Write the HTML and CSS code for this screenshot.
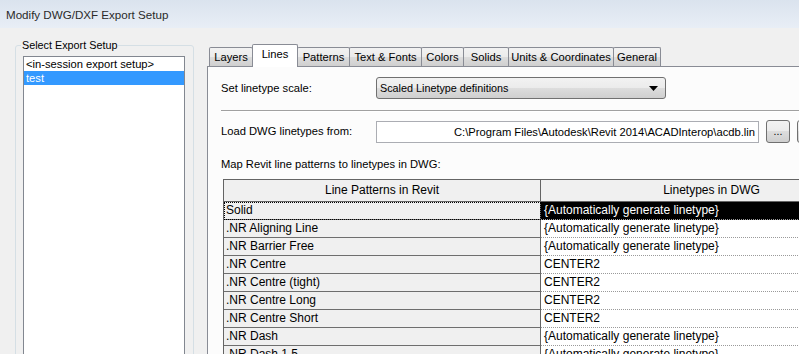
FILE: index.html
```html
<!DOCTYPE html>
<html>
<head>
<meta charset="utf-8">
<link rel="stylesheet" href="styles.css">
</head>
<body>
<div class="titlebar">Modify DWG/DXF Export Setup</div>
<div class="main">
  <div class="group">
    <div class="group-label">Select Export Setup</div>
    <div class="list">
      <div class="item">&lt;in-session export setup&gt;</div>
      <div class="item selected">test</div>
    </div>
  </div>
  <div class="tabs-area">
    <div class="tabs">
      <div class="tab t1">Layers</div>
      <div class="tab active t2">Lines</div>
      <div class="tab t3">Patterns</div>
      <div class="tab t4">Text &amp; Fonts</div>
      <div class="tab t5">Colors</div>
      <div class="tab t6">Solids</div>
      <div class="tab t7">Units &amp; Coordinates</div>
      <div class="tab t8">General</div>
    </div>
    <div class="panel">
      <div class="row row-scale">
        <span class="label">Set linetype scale:</span>
        <div class="combo">
          <span class="combo-text">Scaled Linetype definitions</span>
          <svg class="arrow" width="9" height="5" viewBox="0 0 9 5"><path d="M0 0H9L4.5 5Z" fill="#000"/></svg>
        </div>
      </div>
      <div class="sep"></div>
      <div class="row row-load">
        <span class="label">Load DWG linetypes from:</span>
        <div class="textbox">C:\Program Files\Autodesk\Revit 2014\ACADInterop\acdb.lin</div>
        <div class="btn">...</div>
        <div class="btn"></div>
      </div>
      <div class="caption">Map Revit line patterns to linetypes in DWG:</div>
      <div class="grid">
        <div class="hcell c1">Line Patterns in Revit</div>
        <div class="hcell c2">Linetypes in DWG</div>

        <div class="cell c1 focus">Solid</div>
        <div class="cell c2 sel">{Automatically generate linetype}</div>

        <div class="cell c1">.NR Aligning Line</div>
        <div class="cell c2">{Automatically generate linetype}</div>

        <div class="cell c1">.NR Barrier Free</div>
        <div class="cell c2">{Automatically generate linetype}</div>

        <div class="cell c1">.NR Centre</div>
        <div class="cell c2">CENTER2</div>

        <div class="cell c1">.NR Centre (tight)</div>
        <div class="cell c2">CENTER2</div>

        <div class="cell c1">.NR Centre Long</div>
        <div class="cell c2">CENTER2</div>

        <div class="cell c1">.NR Centre Short</div>
        <div class="cell c2">CENTER2</div>

        <div class="cell c1">.NR Dash</div>
        <div class="cell c2">{Automatically generate linetype}</div>

        <div class="cell c1">.NR Dash 1.5</div>
        <div class="cell c2">{Automatically generate linetype}</div>
      </div>
    </div>
  </div>
</div>
</body>
</html>
```

FILE: styles.css
```css
* { box-sizing: border-box; }
html, body {
  margin: 0;
  padding: 0;
  width: 799px;
  height: 354px;
  overflow: hidden;
  background: #f0f0f0;
  font-family: "Liberation Sans", Arial, sans-serif;
  font-size: 11.2px;
  color: #000;
}
.titlebar {
  height: 28px;
  line-height: 29px;
  padding-left: 6px;
  font-size: 11.6px;
  color: #2a2a2a;
  background: linear-gradient(#dae3ee, #e8eef6);
}
.main {
  display: flex;
  padding-left: 15px;
}
.group {
  flex: none;
  width: 179px;
  height: 400px;
  margin-top: 17px;
  border: 1px solid #d5dfe5;
  border-radius: 3px;
}
.group-label {
  width: fit-content;
  margin: -8px 0 0 5px;
  padding: 0 1px;
  line-height: 15px;
  font-size: 10.8px;
  background: #f0f0f0;
}
.list {
  width: 162px;
  height: 400px;
  margin: 3px 0 0 7px;
  border: 1px solid #828790;
  background: #fff;
}
.item {
  height: 14px;
  line-height: 14px;
  padding-left: 2px;
  white-space: nowrap;
}
.item.selected {
  background: #3399ff;
  color: #fff;
}
.tabs-area {
  flex: none;
  width: 700px;
  margin-left: 13px;
}
.tabs {
  display: flex;
  align-items: flex-end;
  margin-top: 16px;
  padding-left: 2px;
  height: 22px;
  position: relative;
  z-index: 1;
}
.tab {
  height: 19px;
  margin-left: -1px;
  border: 1px solid #898c95;
  border-bottom: none;
  border-radius: 2px 2px 0 0;
  background: linear-gradient(#f2f2f2 0%, #ebebeb 50%, #dddddd 50%, #cfcfcf 100%);
  text-align: center;
  line-height: 18px;
  white-space: nowrap;
}
.tab:first-child { margin-left: 0; }
.tab.active {
  height: 23px;
  margin-bottom: -1px;
  background: #fff;
  line-height: 19px;
}
.t1 { width: 44px; }
.t2 { width: 46px; }
.t3 { width: 53px; }
.t4 { width: 73px; }
.t5 { width: 43px; }
.t6 { width: 46px; }
.t7 { width: 106px; }
.t8 { width: 48px; }
.panel {
  height: 400px;
  border: 1px solid #898c95;
  background: #fcfcfc;
  padding: 10px 0 0 13px;
}
.row {
  display: flex;
  align-items: center;
}
.label {
  width: 155px;
  flex: none;
}
.combo {
  width: 290px;
  height: 22px;
  border: 1px solid #707070;
  border-radius: 3px;
  background: linear-gradient(#f2f2f2 0%, #ebebeb 50%, #dddddd 50%, #cfcfcf 100%);
  display: flex;
  align-items: center;
  justify-content: space-between;
  padding: 0 7px 0 3px;
  font-size: 10.8px;
}
.sep {
  height: 1px;
  margin-top: 11px;
  background: #a0a0a0;
  box-shadow: 0 1px 0 #fff;
}
.row-load {
  margin-top: 9px;
  align-items: flex-start;
}
.row-load .label {
  line-height: 22px;
}
.textbox {
  width: 383px;
  height: 22px;
  line-height: 20px;
  border: 1px solid #abadb3;
  background: #fff;
  text-align: right;
  padding-right: 3px;
  white-space: nowrap;
  overflow: hidden;
  margin-top: 1px;
}
.btn {
  flex: none;
  width: 24px;
  height: 23px;
  margin-left: 7px;
  border: 1px solid #707070;
  border-radius: 3px;
  background: linear-gradient(#f2f2f2 0%, #ebebeb 50%, #dddddd 50%, #cfcfcf 100%);
  text-align: center;
  line-height: 21px;
  font-size: 10.5px;
}
.caption {
  margin-top: 14px;
  line-height: 15px;
}
.grid {
  display: grid;
  grid-template-columns: 317px 341px;
  margin: 7px 0 0 2px;
  width: fit-content;
  border-top: 1px solid #646464;
  border-left: 1px solid #646464;
  font-size: 12px;
}
.hcell {
  height: 22px;
  line-height: 21px;
  text-align: center;
  background: #f0f0f0;
  border-bottom: 1px solid #646464;
}
.hcell.c1 { border-right: 1px solid #646464; }
.cell {
  height: 18px;
  line-height: 17px;
  white-space: nowrap;
}
.cell.c1 {
  background: #f0f0f0;
  border-right: 1px solid #646464;
  border-bottom: 1px solid #6e6e6e;
  padding-left: 2px;
}
.cell.c2 {
  background: #fff;
  border-bottom: 1px dotted #9a9a9a;
  padding-left: 3px;
}
.cell.focus {
  outline: 1px dotted #000;
  outline-offset: -1px;
}
.cell.sel {
  background: #000;
  color: #fff;
}
```
